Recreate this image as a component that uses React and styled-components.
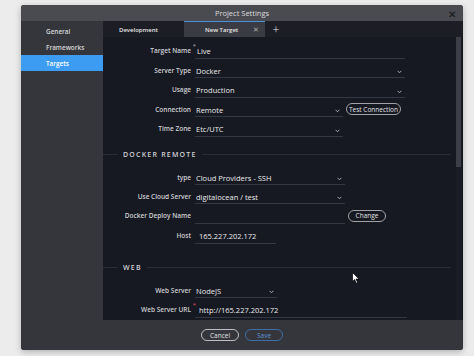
import React from 'react'
import styled, { createGlobalStyle } from 'styled-components'

const Global = createGlobalStyle`
  html, body {
    margin: 0;
    padding: 0;
    background: #ececec;
    font-family: 'Open Sans', 'Noto Sans', sans-serif;
  }
`

const Page = styled.div`
  width: 474px;
  height: 356px;
  padding: 5px 11px 0 21px;
  box-sizing: border-box;
  position: relative;
`

const Window = styled.div`
  width: 442px;
  height: 345px;
  display: flex;
  flex-direction: column;
  background: #35363c;
  border-radius: 3px;
  overflow: hidden;
  box-shadow: 0 2px 6px rgba(0, 0, 0, 0.25);
`

const TitleBar = styled.div`
  height: 16px;
  flex: none;
  display: flex;
  align-items: center;
  justify-content: center;
  position: relative;
  background: #4a4b51;
  color: #dcdcdc;
  font-size: 7.5px;
`

const CloseX = styled.span`
  position: absolute;
  right: 7px;
  top: 2px;
  font-size: 10px;
  font-weight: 700;
  color: #222;
`

const Body = styled.div`
  flex: 1;
  display: flex;
  min-height: 0;
`

const Sidebar = styled.div`
  width: 82px;
  flex: none;
  background: #35363c;
  padding-top: 2px;
`

const NavItem = styled.div`
  height: 16px;
  display: flex;
  align-items: center;
  padding-left: 25px;
  font-size: 6.4px;
  font-weight: 600;
  color: ${p => (p.active ? '#ffffff' : '#d8d8d8')};
  background: ${p => (p.active ? '#3b9cf2' : 'transparent')};
`

const Main = styled.div`
  flex: 1;
  display: flex;
  flex-direction: column;
  min-width: 0;
`

const TabBar = styled.div`
  height: 16px;
  flex: none;
  display: flex;
  align-items: stretch;
  background: #1d1e25;
`

const Tab = styled.div`
  width: 81px;
  box-sizing: border-box;
  display: flex;
  align-items: center;
  justify-content: space-between;
  padding: 0 6px 0 ${p => (p.active ? '21px' : '16px')};
  font-size: 6px;
  font-weight: 600;
  color: #e6e6e6;
  background: ${p => (p.active ? '#3b3c43' : 'transparent')};
  border-top: 1px solid ${p => (p.active ? '#4b8fd6' : 'transparent')};
`

const TabClose = styled.span`
  font-size: 7px;
  color: #aaa;
  font-weight: 400;
`

const AddTab = styled.div`
  width: 22px;
  display: flex;
  align-items: center;
  justify-content: center;
  color: #e8e8e8;
  font-size: 12px;
  font-weight: 300;
`

const ContentWrap = styled.div`
  flex: 1;
  display: flex;
  min-height: 0;
  background: #161822;
`

const Content = styled.div`
  flex: 1;
  padding-top: 4px;
  overflow: hidden;
`

const ScrollTrack = styled.div`
  width: 5px;
  flex: none;
  background: #1b1d26;
  margin-right: 2px;
`

const ScrollThumb = styled.div`
  height: 130px;
  background: #3d3f48;
`

const Row = styled.div`
  display: grid;
  grid-template-columns: 89px 1fr;
  column-gap: 3px;
  align-items: center;
  height: ${p => p.h || 19.5}px;
`

const Label = styled.div`
  text-align: right;
  font-size: 6.5px;
  font-weight: 600;
  color: #cfcfd2;
  position: relative;
  padding-right: 1px;
`

const Req = styled.span`
  position: absolute;
  right: -4px;
  top: -4px;
  font-size: 6px;
  color: ${p => (p.red ? '#d04848' : '#9a9a9a')};
`

const FieldLine = styled.div`
  display: flex;
  align-items: center;
  gap: 3px;
`

const Field = styled.div`
  width: ${p => p.w}px;
  height: 14px;
  box-sizing: border-box;
  display: flex;
  align-items: center;
  justify-content: space-between;
  padding: 0 3px 0 ${p => p.pl || 1}px;
  border-bottom: 1px solid #343744;
  margin-top: 2px;
  font-size: 7.5px;
  color: #ececec;
`

const Chevron = styled.svg`
  width: 5px;
  height: 4px;
  flex: none;
  margin-top: 3px;
`

const PillButton = styled.div`
  height: 12px;
  width: ${p => (p.w ? `${p.w}px` : 'auto')};
  box-sizing: border-box;
  padding: 0 ${p => p.px || 3}px;
  display: flex;
  align-items: center;
  justify-content: center;
  border: 1px solid ${p => p.border || '#a2a2a6'};
  border-radius: 7px;
  font-size: 6.5px;
  color: ${p => p.color || '#e2e2e2'};
  white-space: nowrap;
`

const SectionHead = styled.div`
  display: flex;
  align-items: center;
  gap: 5px;
  height: ${p => p.h}px;
  padding-top: ${p => p.pt || 0}px;
  margin-right: 5px;
  box-sizing: border-box;
  &::before {
    content: '';
    width: 15px;
    border-top: 1px solid #2a2d38;
  }
  &::after {
    content: '';
    flex: 1;
    border-top: 1px solid #2a2d38;
  }
`

const SectionTitle = styled.span`
  font-size: 7px;
  letter-spacing: 1.2px;
  color: #cfcfd2;
  font-weight: 600;
`

const Footer = styled.div`
  height: 30px;
  flex: none;
  display: flex;
  align-items: center;
  justify-content: center;
  gap: 6px;
  background: #35363c;
`

const Cursor = styled.svg`
  position: absolute;
  left: 352px;
  top: 272px;
  width: 8px;
  height: 12px;
`

const Down = () => (
  <Chevron viewBox="0 0 5 4">
    <path d="M0.6 0.8 L2.5 2.8 L4.4 0.8" fill="none" stroke="#b8b8bc" strokeWidth="0.9" />
  </Chevron>
)

const Select = ({ w, value }) => (
  <Field w={w}>
    <span>{value}</span>
    <Down />
  </Field>
)

export default function App() {
  return (
    <Page>
      <Global />
      <Window>
        <TitleBar>
          Project Settings
          <CloseX>✕</CloseX>
        </TitleBar>
        <Body>
          <Sidebar>
            <NavItem>General</NavItem>
            <NavItem>Frameworks</NavItem>
            <NavItem active>Targets</NavItem>
          </Sidebar>
          <Main>
            <TabBar>
              <Tab>Development</Tab>
              <Tab active>
                New Target
                <TabClose>✕</TabClose>
              </Tab>
              <AddTab>+</AddTab>
            </TabBar>
            <ContentWrap>
              <Content>
                <Row>
                  <Label>
                    Target Name<Req>*</Req>
                  </Label>
                  <Field w={210} pl={2}>Live</Field>
                </Row>
                <Row>
                  <Label>Server Type</Label>
                  <Select w={210} value="Docker" />
                </Row>
                <Row>
                  <Label>Usage</Label>
                  <Select w={210} value="Production" />
                </Row>
                <Row>
                  <Label>Connection</Label>
                  <FieldLine>
                    <Select w={148} value="Remote" />
                    <PillButton w={55}>Test Connection</PillButton>
                  </FieldLine>
                </Row>
                <Row>
                  <Label>Time Zone</Label>
                  <Select w={148} value="Etc/UTC" />
                </Row>
                <SectionHead h={29} pt={2}>
                  <SectionTitle>DOCKER REMOTE</SectionTitle>
                </SectionHead>
                <Row h={19}>
                  <Label>type</Label>
                  <Select w={150} value="Cloud Providers - SSH" />
                </Row>
                <Row h={19}>
                  <Label>Use Cloud Server</Label>
                  <Select w={150} value="digitalocean / test" />
                </Row>
                <Row h={20}>
                  <Label>Docker Deploy Name</Label>
                  <FieldLine>
                    <Field w={150} />
                    <PillButton w={38}>Change</PillButton>
                  </FieldLine>
                </Row>
                <Row h={20}>
                  <Label>Host</Label>
                  <Field w={81} pl={4}>165.227.202.172</Field>
                </Row>
                <SectionHead h={34.5} pt={8.5}>
                  <SectionTitle>WEB</SectionTitle>
                </SectionHead>
                <Row h={20}>
                  <Label>Web Server</Label>
                  <Select w={82} value="NodeJS" />
                </Row>
                <Row h={19}>
                  <Label>
                    Web Server URL<Req red>*</Req>
                  </Label>
                  <Field w={212} pl={4}>http://165.227.202.172</Field>
                </Row>
              </Content>
              <ScrollTrack>
                <ScrollThumb />
              </ScrollTrack>
            </ContentWrap>
          </Main>
        </Body>
        <Footer>
          <PillButton w={38} border="#bdbdc2">Cancel</PillButton>
          <PillButton w={38} border="#3f6ea6" color="#5d92d6">Save</PillButton>
        </Footer>
      </Window>
      <Cursor viewBox="0 0 8 12">
        <path d="M0.5 0.5 L0.5 9.5 L2.6 7.6 L4.2 11.2 L5.6 10.6 L4 7.1 L7 7.1 Z" fill="#ffffff" stroke="#000" strokeWidth="0.7" />
      </Cursor>
    </Page>
  )
}
